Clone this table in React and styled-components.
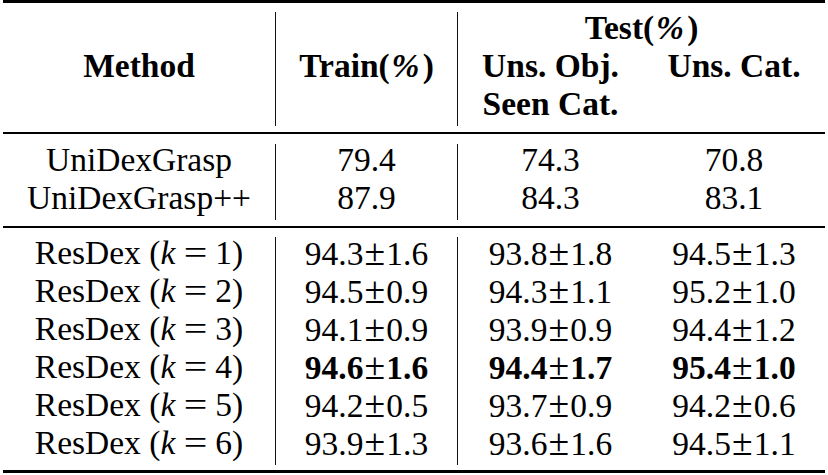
import React from 'react';
import styled, { createGlobalStyle } from 'styled-components';

const COLUMNS = '272px 182px 186px 182px';

const GlobalStyle = createGlobalStyle`
  html, body {
    margin: 0;
    padding: 0;
    background: #fff;
  }
`;

const Table = styled.div`
  width: 822px;
  margin-left: 3px;
  color: #000;
  font-family: 'Liberation Serif', 'Times New Roman', serif;
  font-size: 33.5px;
`;

const Rule = styled.div`
  height: ${({ $heavy }) => ($heavy ? 3 : 2)}px;
  background: #000;
`;

const Section = styled.div`
  padding: ${({ $top }) => $top}px 0 ${({ $bottom }) => $bottom}px;
`;

const Grid = styled.div`
  display: grid;
  grid-template-columns: ${COLUMNS};
  grid-auto-rows: 38px;
`;

const Cell = styled.div`
  line-height: 32px;
  text-align: center;
  white-space: nowrap;
  font-weight: ${({ $bold }) => ($bold ? 700 : 400)};
  border-left: ${({ $divider }) => ($divider ? '1px solid #111' : 'none')};
  grid-column: ${({ $span }) => ($span ? `span ${$span}` : 'auto')};
`;

const Percent = styled.span`
  font-style: italic;
  margin: 0 0.1em 0 0.05em;
`;

const MathK = styled.span`
  font-style: italic;
  margin-right: 0.03em;
`;

const Eq = styled.span`
  display: inline-block;
  margin: 0 0.3em;
  transform: scaleX(1.25);
`;

const Strong = styled.span`
  font-weight: 700;
`;

const Pm = styled.span`
  font-weight: 400;
  font-size: 1.12em;
  line-height: 32px;
  margin: 0 0.03em;
`;

const baselines = [
  { name: 'UniDexGrasp', train: '79.4', obj: '74.3', cat: '70.8' },
  { name: 'UniDexGrasp++', train: '87.9', obj: '84.3', cat: '83.1' },
];

const resdex = [
  { k: 1, train: '94.3±1.6', obj: '93.8±1.8', cat: '94.5±1.3' },
  { k: 2, train: '94.5±0.9', obj: '94.3±1.1', cat: '95.2±1.0' },
  { k: 3, train: '94.1±0.9', obj: '93.9±0.9', cat: '94.4±1.2' },
  { k: 4, train: '94.6±1.6', obj: '94.4±1.7', cat: '95.4±1.0', best: true },
  { k: 5, train: '94.2±0.5', obj: '93.7±0.9', cat: '94.2±0.6' },
  { k: 6, train: '93.9±1.3', obj: '93.6±1.6', cat: '94.5±1.1' },
];

function Value({ value, bold }) {
  const [mean, std] = value.split('±');

  if (!bold) {
    return (
      <>
        {mean}
        <Pm>±</Pm>
        {std}
      </>
    );
  }

  return (
    <>
      <Strong>{mean}</Strong>
      <Pm>±</Pm>
      <Strong>{std}</Strong>
    </>
  );
}

function Header() {
  return (
    <Grid>
      <Cell />
      <Cell $divider />
      <Cell $divider $span={2} $bold>
        Test(<Percent>%</Percent>)
      </Cell>

      <Cell $bold>Method</Cell>
      <Cell $divider $bold>
        Train(<Percent>%</Percent>)
      </Cell>
      <Cell $divider $bold>
        Uns. Obj.
      </Cell>
      <Cell $bold>Uns. Cat.</Cell>

      <Cell />
      <Cell $divider />
      <Cell $divider $bold>
        Seen Cat.
      </Cell>
      <Cell />
    </Grid>
  );
}

export default function App() {
  return (
    <>
      <GlobalStyle />
      <Table>
        <Rule $heavy />
        <Section $top={9} $bottom={6}>
          <Header />
        </Section>
        <Rule />
        <Section $top={10} $bottom={6}>
          <Grid>
            {baselines.map(row => (
              <React.Fragment key={row.name}>
                <Cell>{row.name}</Cell>
                <Cell $divider>{row.train}</Cell>
                <Cell $divider>{row.obj}</Cell>
                <Cell>{row.cat}</Cell>
              </React.Fragment>
            ))}
          </Grid>
        </Section>
        <Rule />
        <Section $top={9} $bottom={5}>
          <Grid>
            {resdex.map(row => (
              <React.Fragment key={row.k}>
                <Cell>
                  ResDex (<MathK>k</MathK>
                  <Eq>=</Eq>
                  {row.k})
                </Cell>
                <Cell $divider>
                  <Value value={row.train} bold={row.best} />
                </Cell>
                <Cell $divider>
                  <Value value={row.obj} bold={row.best} />
                </Cell>
                <Cell>
                  <Value value={row.cat} bold={row.best} />
                </Cell>
              </React.Fragment>
            ))}
          </Grid>
        </Section>
        <Rule $heavy />
      </Table>
    </>
  );
}
